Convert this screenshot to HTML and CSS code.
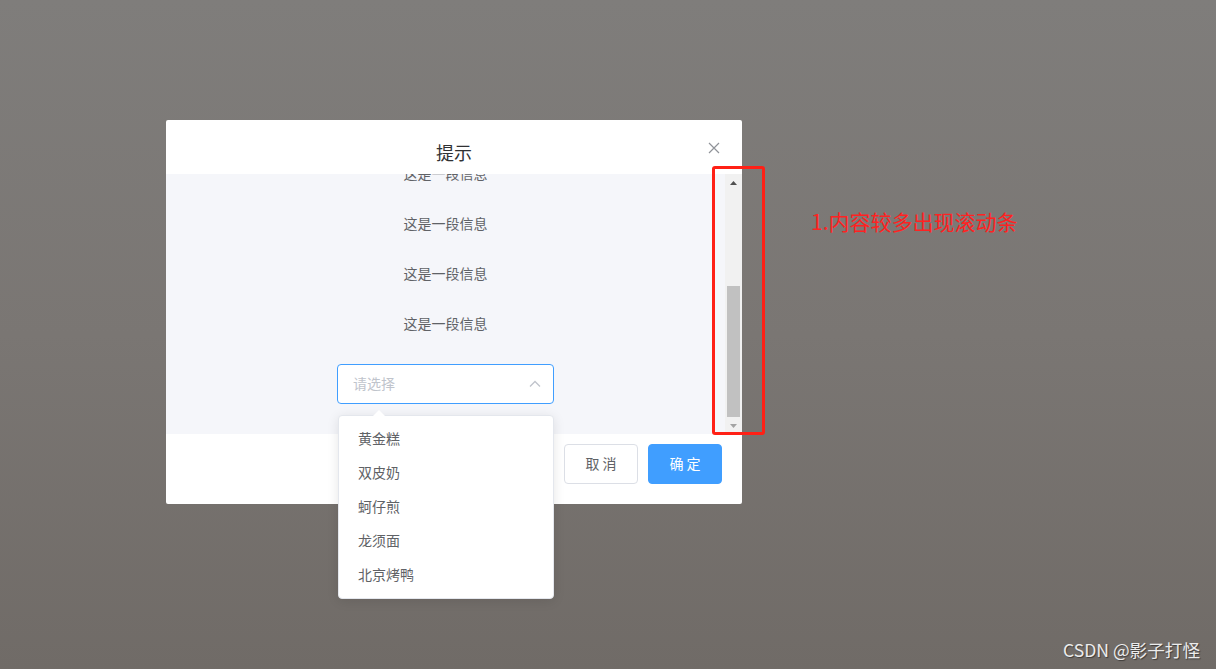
FILE: index.html
```html
<!DOCTYPE html>
<html lang="zh">
<head>
<meta charset="utf-8">
<title>提示</title>
<link rel="stylesheet" href="styles.css">
</head>
<body>
<div class="dialog">
  <div class="dialog-header">
    <span class="dialog-title">提示</span>
    <button class="dialog-close" aria-label="close">
      <svg width="12" height="12" viewBox="0 0 12 12"><path d="M1 1L11 11M11 1L1 11" stroke="#909399" stroke-width="1.2" fill="none"/></svg>
    </button>
  </div>
  <div class="dialog-body">
    <div class="scroll-content">
      <div class="scroll-inner">
        <p class="line">这是一段信息</p>
        <p class="line">这是一段信息</p>
        <p class="line">这是一段信息</p>
        <p class="line">这是一段信息</p>
        <div class="select">
          <span class="placeholder">请选择</span>
          <svg class="chevron" width="12" height="8" viewBox="0 0 12 8"><path d="M1 6.5L6 1.5L11 6.5" stroke="#c0c4cc" stroke-width="1.3" fill="none"/></svg>
        </div>
      </div>
    </div>
    <div class="scrollbar">
      <div class="sb-btn"><svg width="7" height="4" viewBox="0 0 7 4"><path d="M0 4L3.5 0L7 4Z" fill="#505050"/></svg></div>
      <div class="sb-track"></div>
      <div class="sb-thumb"></div>
      <div class="sb-btn"><svg width="7" height="4" viewBox="0 0 7 4"><path d="M0 0L7 0L3.5 4Z" fill="#a3a3a3"/></svg></div>
    </div>
  </div>
  <div class="dialog-footer">
    <button class="btn">取 消</button>
    <button class="btn btn-primary">确 定</button>
  </div>
</div>

<div class="dropdown">
  <span class="dropdown-arrow"></span>
  <ul class="options">
    <li>黄金糕</li>
    <li>双皮奶</li>
    <li>蚵仔煎</li>
    <li>龙须面</li>
    <li>北京烤鸭</li>
  </ul>
</div>

<div class="mark-box"></div>
<div class="mark-text">1.内容较多出现滚动条</div>
<div class="watermark">CSDN @影子打怪</div>
</body>
</html>
```
FILE: styles.css
```css
html, body {
  margin: 0;
  padding: 0;
}
body {
  width: 1216px;
  height: 669px;
  overflow: hidden;
  position: relative;
  background: linear-gradient(180deg, #7f7d7b 0%, #7a7673 50%, #706b67 100%);
  font-family: "Noto Sans CJK SC", "Noto Sans", sans-serif;
}
.dialog {
  position: absolute;
  left: 166px;
  top: 120px;
  width: 576px;
  background: #fff;
  border-radius: 2px;
}
.dialog-header {
  position: relative;
  height: 54px;
  box-sizing: border-box;
  padding: 20px 20px 10px;
  text-align: center;
}
.dialog-title {
  font-size: 18px;
  line-height: 24px;
  color: #303133;
}
.dialog-close {
  position: absolute;
  top: 22px;
  right: 22px;
  width: 12px;
  height: 12px;
  padding: 0;
  border: none;
  background: none;
  display: flex;
}
.dialog-body {
  display: flex;
  height: 260px;
  background: #f5f6fa;
}
.scroll-content {
  flex: 1;
  overflow: hidden;
}
.scroll-inner {
  margin-top: -10px;
  display: flex;
  flex-direction: column;
  align-items: center;
  gap: 30px;
}
.line {
  margin: 0;
  height: 20px;
  font-size: 14px;
  line-height: 18px;
  color: #606266;
}
.select {
  width: 217px;
  height: 40px;
  box-sizing: border-box;
  border: 1px solid #409eff;
  border-radius: 4px;
  background: #fff;
  display: flex;
  align-items: center;
  justify-content: space-between;
  padding: 0 12px 0 15px;
}
.placeholder {
  font-size: 14px;
  line-height: 18px;
  margin-bottom: 2px;
  color: #c0c4cc;
}
.scrollbar {
  width: 17px;
  background: #f1f1f1;
  display: flex;
  flex-direction: column;
}
.sb-btn {
  height: 17px;
  flex-shrink: 0;
  display: flex;
  align-items: center;
  justify-content: center;
}
.sb-track {
  flex: 1;
}
.sb-thumb {
  height: 131px;
  margin: 0 2px;
  background: #c1c1c1;
}
.dialog-footer {
  display: flex;
  justify-content: flex-end;
  gap: 10px;
  padding: 10px 20px 20px;
}
.btn {
  height: 40px;
  width: 74px;
  box-sizing: border-box;
  border: 1px solid #dcdfe6;
  border-radius: 4px;
  background: #fff;
  color: #606266;
  font-family: "Noto Sans CJK SC", "Noto Sans", sans-serif;
  font-size: 14px;
  padding: 0 0 2px;
}
.btn-primary {
  background: #409eff;
  border-color: #409eff;
  color: #fff;
}
.dropdown {
  position: absolute;
  left: 338px;
  top: 415px;
  width: 216px;
  box-sizing: border-box;
  background: #fff;
  border: 1px solid #e4e7ed;
  border-radius: 4px;
  box-shadow: 0 2px 12px rgba(0, 0, 0, 0.1);
}
.dropdown-arrow {
  position: absolute;
  left: 34px;
  top: -6px;
  width: 0;
  height: 0;
  border-left: 6px solid transparent;
  border-right: 6px solid transparent;
  border-bottom: 6px solid #fff;
}
.options {
  list-style: none;
  margin: 0;
  padding: 6px 0;
}
.options li {
  height: 34px;
  line-height: 32px;
  padding: 0 19px;
  font-size: 14px;
  color: #606266;
}
.mark-box {
  position: absolute;
  left: 712px;
  top: 166px;
  width: 53px;
  height: 269px;
  box-sizing: border-box;
  border: 3px solid #ff2016;
  border-radius: 3px;
}
.mark-text {
  position: absolute;
  left: 811px;
  top: 207px;
  font-size: 21px;
  line-height: 28px;
  color: #ff2222;
}
.watermark {
  position: absolute;
  right: 16px;
  bottom: 8px;
  font-size: 17.6px;
  line-height: 22px;
  color: #ececec;
  text-shadow: 1px 1px 1px rgba(0, 0, 0, 0.45);
}
```
